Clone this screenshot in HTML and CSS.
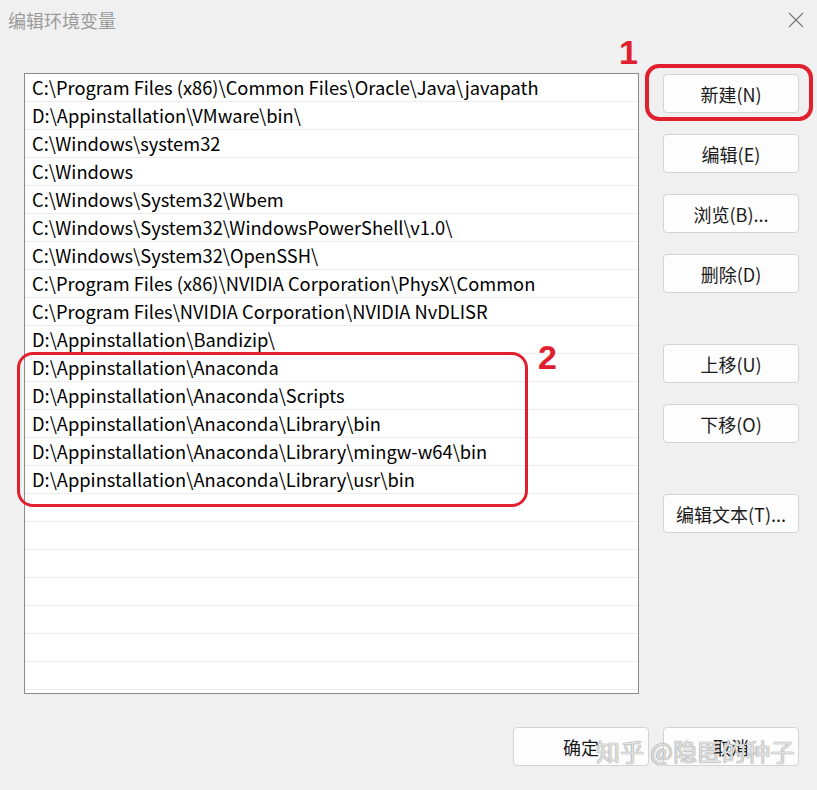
FILE: index.html
```html
<!DOCTYPE html>
<html lang="zh-CN">
<head>
<meta charset="utf-8">
<title>编辑环境变量</title>
<link rel="stylesheet" href="styles.css">
</head>
<body>
<div class="dialog">
  <div class="titlebar">
    <span class="title">编辑环境变量</span>
    <svg class="close" width="16" height="16" viewBox="0 0 16 16"><path d="M1 1L15 15M15 1L1 15" stroke="#777" stroke-width="1.2" fill="none"/></svg>
  </div>
  <div class="main">
    <div class="list">
      <div class="row">C:\Program Files (x86)\Common Files\Oracle\Java\javapath</div>
      <div class="row">D:\Appinstallation\VMware\bin\</div>
      <div class="row">C:\Windows\system32</div>
      <div class="row">C:\Windows</div>
      <div class="row">C:\Windows\System32\Wbem</div>
      <div class="row">C:\Windows\System32\WindowsPowerShell\v1.0\</div>
      <div class="row">C:\Windows\System32\OpenSSH\</div>
      <div class="row">C:\Program Files (x86)\NVIDIA Corporation\PhysX\Common</div>
      <div class="row">C:\Program Files\NVIDIA Corporation\NVIDIA NvDLISR</div>
      <div class="row">D:\Appinstallation\Bandizip\</div>
      <div class="row">D:\Appinstallation\Anaconda</div>
      <div class="row">D:\Appinstallation\Anaconda\Scripts</div>
      <div class="row">D:\Appinstallation\Anaconda\Library\bin</div>
      <div class="row">D:\Appinstallation\Anaconda\Library\mingw-w64\bin</div>
      <div class="row">D:\Appinstallation\Anaconda\Library\usr\bin</div>
      <div class="row"></div>
      <div class="row"></div>
      <div class="row"></div>
      <div class="row"></div>
      <div class="row"></div>
      <div class="row"></div>
      <div class="row"></div>
      <div class="row"></div>
    </div>
    <div class="side">
      <div class="group">
        <button class="btn">新建(N)</button>
        <button class="btn">编辑(E)</button>
        <button class="btn">浏览(B)...</button>
        <button class="btn">删除(D)</button>
      </div>
      <div class="group">
        <button class="btn">上移(U)</button>
        <button class="btn">下移(O)</button>
      </div>
      <div class="group">
        <button class="btn">编辑文本(T)...</button>
      </div>
    </div>
  </div>
  <div class="footer">
    <button class="btn">确定</button>
    <button class="btn">取消</button>
  </div>

  <div class="mark mark1"></div>
  <div class="num num1">1</div>
  <div class="mark mark2"></div>
  <div class="num num2">2</div>
  <div class="watermark">知乎 @隐匿的种子</div>
</div>
</body>
</html>
```
FILE: styles.css
```css
html, body {
  margin: 0;
  padding: 0;
  background: #f0f0f0;
}
body {
  font-family: "Noto Sans CJK SC", "Noto Sans", sans-serif;
  color: #000;
}
.dialog {
  position: relative;
  width: 817px;
  height: 790px;
  overflow: hidden;
}
.titlebar {
  height: 40px;
  display: flex;
  align-items: center;
  justify-content: space-between;
  padding: 0 13px 0 8px;
}
.title {
  font-size: 18px;
  color: #9a9a9a;
}
.close {
  display: block;
}
.main {
  display: flex;
  padding: 33px 0 0 24px;
}
.list {
  width: 613px;
  height: 619px;
  border: 1px solid #8a8a8a;
  background: #fff;
  overflow: hidden;
}
.row {
  height: 27px;
  border-bottom: 1px solid #ececec;
  padding-left: 7px;
  font-family: "Noto Sans CJK SC", "Noto Sans", sans-serif;
  font-size: 18.3px;
  line-height: 27px;
  white-space: nowrap;
}
.side {
  margin-left: 24px;
  padding-top: 1px;
  display: flex;
  flex-direction: column;
  gap: 51px;
}
.group {
  display: flex;
  flex-direction: column;
  gap: 21px;
}
.btn {
  width: 136px;
  height: 39px;
  background: #fdfdfd;
  border: 1px solid #d3d3d3;
  border-radius: 4px;
  font-family: "Noto Sans CJK SC", "Noto Sans", sans-serif;
  font-size: 18px;
  color: #1a1a1a;
  padding: 0;
}
.footer {
  display: flex;
  justify-content: flex-end;
  gap: 14px;
  padding: 33px 18px 0 0;
}
.mark {
  position: absolute;
  border: 4px solid #e0202e;
  border-radius: 14px;
  box-sizing: border-box;
}
.mark1 {
  left: 645px;
  top: 64px;
  width: 168px;
  height: 57px;
}
.mark2 {
  left: 17px;
  top: 352px;
  width: 511px;
  height: 155px;
  border-width: 3px;
  border-radius: 16px;
}
.num {
  position: absolute;
  font-family: "Liberation Sans", sans-serif;
  font-weight: bold;
  font-size: 34px;
  color: #e0202e;
  line-height: 1;
}
.num1 {
  left: 619px;
  top: 35px;
}
.num2 {
  left: 538px;
  top: 340px;
}
.watermark {
  position: absolute;
  left: 596px;
  top: 733px;
  font-size: 24px;
  color: rgba(255, 255, 255, 0.75);
  text-shadow: 0 0 1px #888, 0 0 1px #888;
  white-space: nowrap;
  letter-spacing: 0.3px;
}
```
